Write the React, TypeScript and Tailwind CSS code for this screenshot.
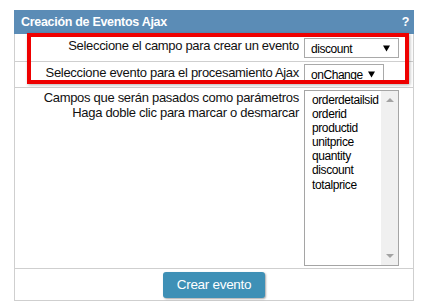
const fields = [
  "orderdetailsid",
  "orderid",
  "productid",
  "unitprice",
  "quantity",
  "discount",
  "totalprice",
];

const FakeSelect = ({ value, width }: { value: string; width: string }) => (
  <div
    className={`flex h-[20px] ${width} items-center justify-between border border-[#a9a9a9] bg-white pl-[6px] pr-[8px] text-[12px] tracking-[-0.45px] text-black`}
  >
    <span className="pt-[1px]">{value}</span>
    <svg width="7" height="7" viewBox="0 0 7 7">
      <polygon points="0,0.5 7,0.5 3.5,6.5" fill="#000" />
    </svg>
  </div>
);

export default function App() {
  return (
    <div className="relative h-[308px] w-[428px] bg-white font-['Liberation_Sans',Arial,sans-serif]">
      <div className="absolute left-[14px] top-[10px] w-[400px]">
        <header className="flex h-[24px] items-center justify-between bg-[#5b8cb6] pl-[7px] pr-[5px] text-[12.5px] font-bold tracking-[-0.3px] text-white">
          <span>Creación de Eventos Ajax</span>
          <span>?</span>
        </header>

        <section className="border-x border-b border-[#cfcfcf]">
          <div className="grid grid-cols-[289px_1fr] border-b border-[#cfcfcf] pb-[3px] pt-[4px]">
            <label className="pr-[5px] text-right text-[13px] leading-[15px] tracking-[-0.32px] text-[#111]">
              Seleccione el campo para crear un evento
            </label>
            <FakeSelect value="discount" width="w-[95px]" />
          </div>

          <div className="grid grid-cols-[289px_1fr] border-b border-[#cfcfcf] pb-[3px] pt-[2px]">
            <label className="pr-[5px] pt-[1px] text-right text-[13px] leading-[15px] tracking-[-0.3px] text-[#111]">
              Seleccione evento para el procesamiento Ajax
            </label>
            <FakeSelect value="onChange" width="w-[80px]" />
          </div>

          <div className="grid grid-cols-[289px_1fr] border-b border-[#cfcfcf] pb-[2px] pt-[2px]">
            <div className="pr-[5px] pt-[1px] text-right text-[13px] leading-[14.5px] tracking-[-0.3px] text-[#111]">
              <p>Campos que serán pasados como parámetros</p>
              <p>Haga doble clic para marcar o desmarcar</p>
            </div>
            <div className="flex h-[176px] w-[95px] border border-[#a5a5a5] bg-white">
              <ul className="flex-1 pl-[7px] pt-[2px] text-[12px] leading-[14.1px] tracking-[-0.4px] text-black">
                {fields.map((field) => (
                  <li key={field}>{field}</li>
                ))}
              </ul>
              <div className="flex w-[17px] flex-col items-center justify-between bg-[#f0f0f0] py-[7px]">
                <span className="h-0 w-0 border-x-[4px] border-b-[4px] border-x-transparent border-b-[#a3a3a3]" />
                <span className="h-0 w-0 border-x-[4px] border-t-[4px] border-x-transparent border-t-[#a3a3a3]" />
              </div>
            </div>
          </div>

          <div className="flex justify-center pb-[2px] pt-[3px]">
            <button className="h-[26px] w-[102px] rounded-[3px] bg-[#3e90b6] text-[13.5px] tracking-[-0.3px] text-white shadow-[1px_1px_2px_rgba(0,0,0,0.35)]">
              Crear evento
            </button>
          </div>
        </section>
      </div>

      <div className="pointer-events-none absolute left-[27px] top-[33px] h-[51px] w-[382px] border-4 border-[#ee0000] shadow-[1px_1px_3px_rgba(0,0,0,0.3)]" />
    </div>
  );
}
